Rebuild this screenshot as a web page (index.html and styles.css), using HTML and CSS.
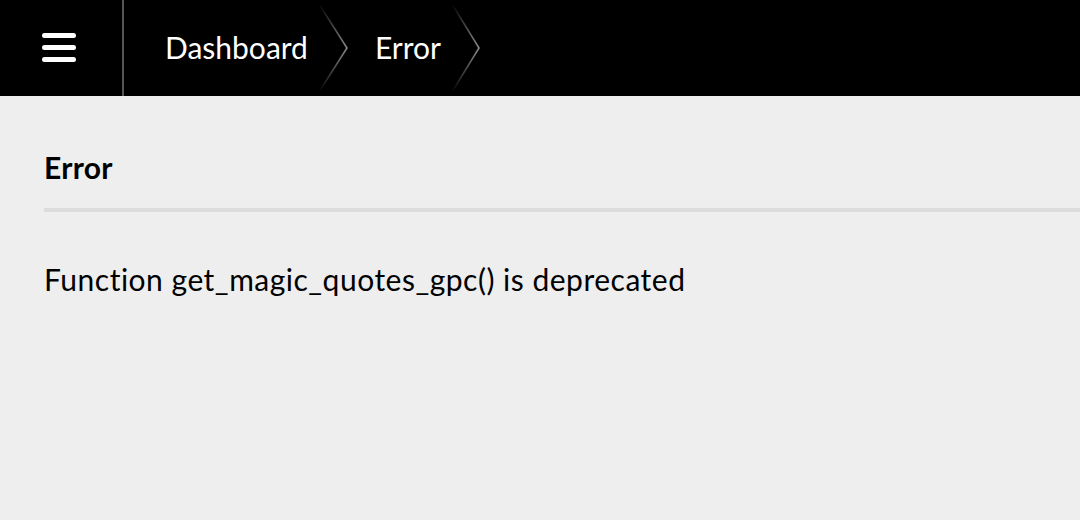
FILE: index.html
```html
<!DOCTYPE html>
<html lang="en">
<head>
<meta charset="utf-8">
<title>Error</title>
<link rel="stylesheet" href="styles.css">
</head>
<body>
<header class="topbar">
  <button class="menu-btn" aria-label="Menu">
    <svg width="34" height="29" viewBox="0 0 34 29">
      <rect x="0" y="0" width="34" height="5" rx="2.5" fill="#fff"/>
      <rect x="0" y="12" width="34" height="5" rx="2.5" fill="#fff"/>
      <rect x="0" y="24" width="34" height="5" rx="2.5" fill="#fff"/>
    </svg>
  </button>
  <nav class="crumbs">
    <a class="crumb" href="#">Dashboard</a>
    <svg class="chev" width="32" height="96" viewBox="0 0 32 96">
      <defs>
        <linearGradient id="g1" x1="0" y1="0" x2="0" y2="1">
          <stop offset="0" stop-color="#000"/>
          <stop offset="0.5" stop-color="#8a8a8a"/>
          <stop offset="1" stop-color="#000"/>
        </linearGradient>
      </defs>
      <polyline points="2,4 30,48 2,92" fill="none" stroke="url(#g1)" stroke-width="1.6"/>
    </svg>
    <a class="crumb" href="#">Error</a>
    <svg class="chev" width="32" height="96" viewBox="0 0 32 96">
      <polyline points="2,4 29,48 2,92" fill="none" stroke="url(#g1)" stroke-width="1.6"/>
    </svg>
  </nav>
</header>
<main class="content">
  <h1 class="title">Error</h1>
  <p class="message">Function get_magic_quotes_gpc() is deprecated</p>
</main>
</body>
</html>
```
FILE: styles.css
```css
html, body {
  margin: 0;
  padding: 0;
  height: 100%;
}
body {
  background: #eeeeee;
  font-family: "Lato", "Open Sans", sans-serif;
  color: #000;
}
.topbar {
  display: flex;
  align-items: stretch;
  height: 96px;
  background: #000;
}
.menu-btn {
  display: flex;
  align-items: center;
  width: 124px;
  padding: 0 0 2px 42px;
  margin: 0;
  background: transparent;
  border: 0;
  border-right: 2px solid #555;
  box-sizing: border-box;
  cursor: pointer;
}
.menu-btn svg {
  display: block;
}
.crumbs {
  display: flex;
  align-items: center;
  padding-left: 41px;
}
.crumb {
  color: #fff;
  text-decoration: none;
  font-size: 30px;
  line-height: 36px;
  margin-bottom: 3px;
}
.chev {
  display: block;
  margin: 0 26px 0 9px;
}
.content {
  padding: 53px 0 0 44px;
}
.title {
  margin: 0;
  padding-bottom: 23px;
  border-bottom: 4px solid #dcdcdc;
  font-size: 30px;
  line-height: 36px;
  font-weight: 700;
  letter-spacing: 0.3px;
}
.message {
  margin: 49px 0 0;
  font-size: 30px;
  line-height: 36px;
  letter-spacing: 0.5px;
}
```
